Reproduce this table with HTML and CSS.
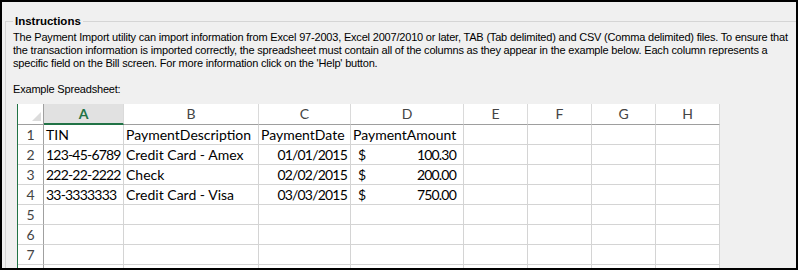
FILE: index.html
```html
<!DOCTYPE html>
<html>
<head>
<meta charset="utf-8">
<link rel="stylesheet" href="styles.css">
</head>
<body>
<div class="frame">
  <fieldset class="group">
    <legend class="group-title">Instructions</legend>
    <div class="intro">
      <p class="line">The Payment Import utility can import information from Excel 97-2003, Excel 2007/2010 or later, TAB (Tab delimited) and CSV (Comma delimited) files. To ensure that</p>
      <p class="line">the transaction information is imported correctly, the spreadsheet must contain all of the columns as they appear in the example below. Each column represents a</p>
      <p class="line">specific field on the Bill screen. For more information click on the 'Help' button.</p>
      <p class="line blank">&nbsp;</p>
      <p class="line">Example Spreadsheet:</p>
    </div>
    <div class="sheet">
      <div class="row head">
        <div class="cell corner"><span class="tri"></span></div>
        <div class="cell colh sel">A</div>
        <div class="cell colh">B</div>
        <div class="cell colh">C</div>
        <div class="cell colh">D</div>
        <div class="cell colh">E</div>
        <div class="cell colh">F</div>
        <div class="cell colh">G</div>
        <div class="cell colh">H</div>
      </div>
      <div class="row">
        <div class="cell rowh">1</div>
        <div class="cell">TIN</div>
        <div class="cell">PaymentDescription</div>
        <div class="cell">PaymentDate</div>
        <div class="cell">PaymentAmount</div>
        <div class="cell"></div><div class="cell"></div><div class="cell"></div><div class="cell"></div>
      </div>
      <div class="row">
        <div class="cell rowh">2</div>
        <div class="cell n">123-45-6789</div>
        <div class="cell">Credit Card - Amex</div>
        <div class="cell num n">01/01/2015</div>
        <div class="cell acct"><span>$</span><span class="n">100.30</span></div>
        <div class="cell"></div><div class="cell"></div><div class="cell"></div><div class="cell"></div>
      </div>
      <div class="row">
        <div class="cell rowh">3</div>
        <div class="cell n">222-22-2222</div>
        <div class="cell">Check</div>
        <div class="cell num n">02/02/2015</div>
        <div class="cell acct"><span>$</span><span class="n">200.00</span></div>
        <div class="cell"></div><div class="cell"></div><div class="cell"></div><div class="cell"></div>
      </div>
      <div class="row">
        <div class="cell rowh">4</div>
        <div class="cell n">33-3333333</div>
        <div class="cell">Credit Card - Visa</div>
        <div class="cell num n">03/03/2015</div>
        <div class="cell acct"><span>$</span><span class="n">750.00</span></div>
        <div class="cell"></div><div class="cell"></div><div class="cell"></div><div class="cell"></div>
      </div>
      <div class="row">
        <div class="cell rowh">5</div>
        <div class="cell"></div><div class="cell"></div><div class="cell"></div><div class="cell"></div>
        <div class="cell"></div><div class="cell"></div><div class="cell"></div><div class="cell"></div>
      </div>
      <div class="row">
        <div class="cell rowh">6</div>
        <div class="cell"></div><div class="cell"></div><div class="cell"></div><div class="cell"></div>
        <div class="cell"></div><div class="cell"></div><div class="cell"></div><div class="cell"></div>
      </div>
      <div class="row">
        <div class="cell rowh">7</div>
        <div class="cell"></div><div class="cell"></div><div class="cell"></div><div class="cell"></div>
        <div class="cell"></div><div class="cell"></div><div class="cell"></div><div class="cell"></div>
      </div>
      <div class="row">
        <div class="cell rowh"></div>
        <div class="cell"></div><div class="cell"></div><div class="cell"></div><div class="cell"></div>
        <div class="cell"></div><div class="cell"></div><div class="cell"></div><div class="cell"></div>
      </div>
    </div>
  </fieldset>
</div>
</body>
</html>
```

FILE: styles.css
```css
* { box-sizing: border-box; }
html, body { margin: 0; padding: 0; background: #000; }
body { width: 798px; height: 270px; overflow: hidden; }

.frame {
  width: 798px;
  height: 270px;
  border: 2px solid #000;
  background: #f0f0f0;
  overflow: hidden;
  padding: 12px 0 0 3px;
}

.group {
  margin: 0;
  padding: 0 0 0 7px;
  border: 1px solid #d5d5d5;
  border-right: none;
  border-bottom: none;
  min-width: 0;
  font-family: "Liberation Sans", Arial, sans-serif;
  color: #000;
}

.group-title {
  margin-left: 0;
  padding: 0 2px;
  font-weight: bold;
  font-size: 11.5px;
  line-height: 14px;
}

.intro { padding-top: 3px; }
.line {
  margin: 0;
  font-size: 11px;
  line-height: 13px;
  letter-spacing: -0.19px;
  white-space: nowrap;
}

.sheet {
  margin: 8px 0 0 4px;
  border-left: 1px solid #217346;
  width: 703px;
  background: #fff;
  font-family: Lato, "Liberation Sans", sans-serif;
  font-size: 14px;
  color: #000;
}

.row {
  display: grid;
  grid-template-columns: 26px 80px 135px 92px 113px 64px 64px 64px 64px;
  height: 20px;
}
.row.head { height: 21px; }

.cell {
  border-right: 1px solid #d4d4d4;
  border-bottom: 1px solid #d4d4d4;
  padding: 0 2px 0 2px;
  line-height: 19px;
  white-space: nowrap;
  overflow: hidden;
}
.n { letter-spacing: -0.8px; }
.row.head .cell {
  border-bottom-color: #9e9e9e;
  line-height: 20px;
  text-align: center;
  color: #444;
  border-right-color: #dadada;
}
.row.head .cell.sel {
  background: #e1e1e1;
  color: #217346;
  font-weight: bold;
  border-bottom: 2px solid #217346;
}
.corner {
  display: flex;
  justify-content: flex-end;
  align-items: flex-end;
  padding: 0 2px 3px 0 !important;
}
.row .cell.corner, .row .cell.rowh { border-right-color: #a0a0a0; }
.tri {
  width: 0;
  height: 0;
  border-left: 9px solid transparent;
  border-bottom: 9px solid #dcdcdc;
}
.rowh {
  text-align: center;
  color: #444;
  padding: 0;
}
.num { text-align: right; padding-right: 3px; }
.acct {
  display: flex;
  justify-content: space-between;
  padding: 0 7px 0 7px;
}
```
